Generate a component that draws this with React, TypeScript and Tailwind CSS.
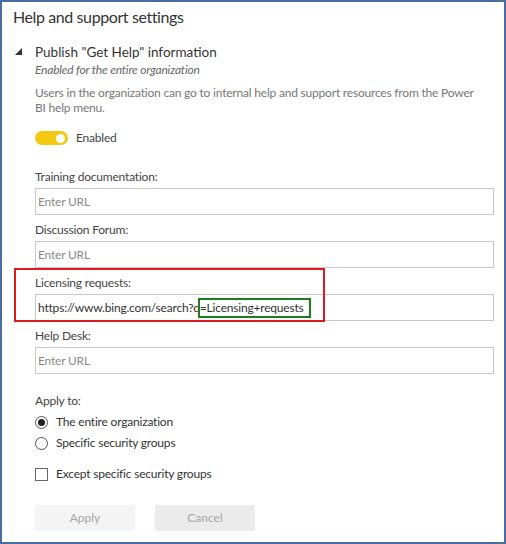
import React from "react";

const font = { fontFamily: 'Lato, "Noto Sans", Arial, sans-serif' };

function UrlField({ label, value }: { label: string; value?: string }) {
    return (
        <div className="flex flex-col">
            <label className="text-[12px] tracking-[-0.2px] leading-[16px] text-[#444] mt-[7px] mb-[3px]">{label}</label>
            <div className="h-[27px] w-[459px] border border-[#c8c8c8] flex items-center px-[2px] text-[12px] tracking-[-0.2px]">
                {value ? <span className="text-[#333]">{value}</span> : <span className="text-[#8a8a8a]">Enter URL</span>}
            </div>
        </div>
    );
}

export default function App() {
    return (
        <div className="w-[506px] h-[544px] bg-white border-2 border-[#4a6d9f] overflow-hidden" style={font}>
            <div className="pl-[11px] pt-[3px]">
                <h1 className="text-[16px] tracking-[-0.4px] leading-[24px] text-[#333]">Help and support settings</h1>
            </div>

            <div className="pl-[13px] pt-[14px] flex items-start">
                {/* Collapse triangle */}
                <svg width="8" height="8" viewBox="0 0 8 8" className="mt-[5px] mr-[12px]">
                    <polygon points="7,0 7,7 0,7" fill="#333" />
                </svg>
                <div className="flex flex-col">
                    <h2 className="text-[13.5px] leading-[19px] text-[#333]">Publish "Get Help" information</h2>
                    <p className="text-[12px] tracking-[-0.2px] leading-[16px] italic text-[#666]">Enabled for the entire organization</p>
                    <p className="text-[12px] tracking-[-0.2px] leading-[15px] text-[#777] mt-[7px] w-[445px]">
                        Users in the organization can go to internal help and support resources from the Power BI help menu.
                    </p>

                    <div className="flex items-center mt-[14px]">
                        <div className="w-[33px] h-[14px] rounded-full bg-[#f2c811] flex items-center justify-end pr-[3px]">
                            <div className="w-[9px] h-[9px] rounded-full bg-white" />
                        </div>
                        <span className="ml-[8px] text-[12px] tracking-[-0.2px] text-[#444]">Enabled</span>
                    </div>

                    <div className="mt-[15px]">
                        <UrlField label="Training documentation:" />
                        <UrlField label="Discussion Forum:" />
                        <div className="relative">
                            <UrlField label="Licensing requests:" value="https://www.bing.com/search?q=Licensing+requests" />
                            {/* Annotation boxes */}
                            <div className="absolute left-[-21px] top-[0px] w-[311px] h-[54px] border-2 border-[#e0191f]" />
                            <div className="absolute left-[163px] top-[30px] w-[113px] h-[20px] border-2 border-[#1e7b1e]" />
                        </div>
                        <UrlField label="Help Desk:" />
                    </div>

                    <p className="text-[12px] tracking-[-0.2px] leading-[16px] text-[#444] mt-[19px]">Apply to:</p>
                    <div className="flex items-center h-[16px] mt-[5px]">
                        <div className="w-[13px] h-[13px] rounded-full border border-[#555] flex items-center justify-center">
                            <div className="w-[7px] h-[7px] rounded-full bg-[#222]" />
                        </div>
                        <span className="ml-[8px] text-[12px] tracking-[-0.2px] text-[#333]">The entire organization</span>
                    </div>
                    <div className="flex items-center h-[16px] mt-[5px]">
                        <div className="w-[13px] h-[13px] rounded-full border border-[#555]" />
                        <span className="ml-[8px] text-[12px] tracking-[-0.2px] text-[#333]">Specific security groups</span>
                    </div>
                    <div className="flex items-center h-[16px] mt-[15px]">
                        <div className="w-[13px] h-[13px] border border-[#666]" />
                        <span className="ml-[8px] text-[12px] tracking-[-0.2px] text-[#333]">Except specific security groups</span>
                    </div>

                    <div className="flex gap-[20px] mt-[23px]">
                        <button className="w-[100px] h-[26px] bg-[#f4f4f4] text-[12px] text-[#a6a6a6]">Apply</button>
                        <button className="w-[100px] h-[26px] bg-[#ebebeb] text-[12px] text-[#a6a6a6]">Cancel</button>
                    </div>
                </div>
            </div>
        </div>
    );
}
